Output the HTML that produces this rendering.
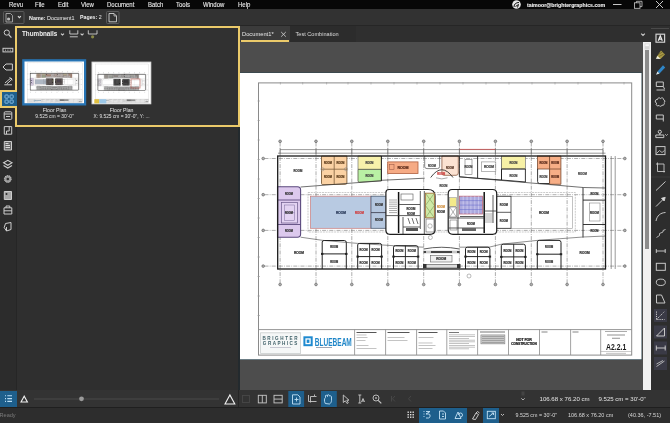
<!DOCTYPE html>
<html><head><meta charset="utf-8">
<style>
*{box-sizing:border-box}
html,body{margin:0;padding:0}
body{width:670px;height:423px;overflow:hidden;position:relative;background:#2e2e2e;font-family:"Liberation Sans",sans-serif;color:#ddd}
.a{position:absolute}
.t{position:absolute;white-space:nowrap;line-height:1}
svg{position:absolute;overflow:visible}
#menu{left:0;top:0;width:670px;height:9px;background:#070707}
#menu .t{top:2.05px;font-size:6.6px;color:#e6e6e6;-webkit-text-stroke:0.12px #e6e6e6;transform:scaleX(0.91);transform-origin:0 0}
#tb{left:0;top:9px;width:670px;height:16px;background:#323232}
#tabline{left:240px;top:25px;width:430px;height:1px;background:#262626}
#tabbar{left:240px;top:26px;width:430px;height:16px;background:#2f2f2f}
#doc{left:240px;top:42px;width:403px;height:348px;background:#4d4d4d}
#lside{left:0;top:25px;width:17px;height:365px;background:#2c2c2c}
#panel{left:15px;top:26px;width:225px;height:101px;border:2px solid #ebca6a;background:#313131}
#below{left:17px;top:127px;width:223px;height:263px;background:#2f2f2f}
#rside{left:651px;top:42px;width:19px;height:348px;background:#2d2d2d}
#btb{left:0;top:390px;width:670px;height:17px;background:#333333}
#status{left:0;top:407px;width:670px;height:16px;background:#2d2d2d;border-top:1px solid #1f1f1f}
.ic{stroke:#c8c8c8;fill:none;stroke-width:1}
</style></head><body><div id="wrap" style="position:absolute;left:0;top:0;width:670px;height:423px;will-change:transform">
<div id="menu" class="a">
 <span class="t" style="left:8.5px">Revu</span>
 <span class="t" style="left:35px">File</span>
 <span class="t" style="left:58px">Edit</span>
 <span class="t" style="left:81px">View</span>
 <span class="t" style="left:107px">Document</span>
 <span class="t" style="left:147.5px">Batch</span>
 <span class="t" style="left:176px">Tools</span>
 <span class="t" style="left:203px">Window</span>
 <span class="t" style="left:238px">Help</span>
 <span class="t" style="left:526.5px;font-size:6.1px;top:1.7px;color:#f2f2f2;font-weight:bold;transform:scaleX(0.86);transform-origin:0 0">taimoor@brightergraphics.com</span>
 <svg style="left:0;top:0" width="670" height="9">
  <circle cx="516.5" cy="4.5" r="4.3" fill="#e8e8e8"/>
  <path d="M514 7 C514 4,516 2.5,519 2.5 M515.5 6.5 L518.5 4.5 L517.5 7.5" stroke="#111" stroke-width="1" fill="none"/>
  <line x1="613" y1="4.5" x2="621.5" y2="4.5" stroke="#ddd" stroke-width="0.9"/>
  <rect x="634.5" y="2.8" width="5.5" height="5.5" stroke="#ccc" stroke-width="0.8" fill="none"/>
  <path d="M636.5 2.8 V1.3 H642 V6.6 H640" stroke="#ccc" stroke-width="0.8" fill="none"/>
  <path d="M656 1 L663 8 M663 1 L656 8" stroke="#ddd" stroke-width="0.9"/>
 </svg>
</div>
<div id="tb" class="a"></div>
<svg style="left:0;top:0" width="240" height="26">
 <rect x="3.5" y="11.5" width="20.5" height="12" rx="1" stroke="#5a5a5a" fill="none" stroke-width="1"/>
 <path d="M6 13.5 H10.5 L12.5 15.5 V22 H6 Z" stroke="#aaa" fill="none" stroke-width="0.9"/>
 <circle cx="8.6" cy="19" r="1.6" fill="#bbb"/>
 <path d="M17.9 16.2 L19.4 17.7 L20.9 16.2" stroke="#d8d8d8" fill="none" stroke-width="1.1"/><line x1="14" y1="12" x2="14" y2="23.5" stroke="#3e3e3e" stroke-width="0.8"/>
 <rect x="106.5" y="11.5" width="12.5" height="12" rx="1" stroke="#5a5a5a" fill="none" stroke-width="1"/>
 <path d="M109 13.5 H114 L116.5 16 V21.8 H109 Z" stroke="#d0d0d0" fill="none" stroke-width="0.9"/>
 <path d="M114 13.5 V16 H116.5" stroke="#d0d0d0" fill="none" stroke-width="0.7"/>
</svg>
<span class="t" style="left:28.6px;top:14.9px;font-size:6px;color:#f0f0f0;transform:scaleX(0.9);transform-origin:0 0"><b>Name:</b> Document1</span>
<span class="t" style="left:80px;top:14.9px;font-size:5.85px;color:#f0f0f0;transform:scaleX(0.9);transform-origin:0 0"><b>Pages:</b> 2</span>
<div id="tabline" class="a"></div>
<div id="tabbar" class="a"></div>
<div class="a" style="left:240px;top:26px;width:50px;height:16px;background:#3b3b3b"></div>
<div class="a" style="left:290px;top:26px;width:66px;height:16px;background:#2c2c2c"></div>
<div class="a" style="left:241px;top:40px;width:48px;height:2px;background:#ebca6a"></div>
<span class="t" style="left:242px;top:31.6px;font-size:5.75px;color:#e8e8e8">Document1*</span>
<svg style="left:0;top:0" width="670" height="50">
 <path d="M281.2 32 L285.8 36.6 M285.8 32 L281.2 36.6" stroke="#ccc" stroke-width="0.9"/>
 <path d="M641.2 33.6 L643 35.4 L644.8 33.6" stroke="#ccc" stroke-width="1.2" fill="none"/>
</svg>
<span class="t" style="left:295.5px;top:31.6px;font-size:5.6px;color:#ddd">Test Combination</span>
<div id="lside" class="a"></div>
<div id="below" class="a"></div>
<div class="a" style="left:16px;top:127px;width:1px;height:263px;background:#262626"></div>
<div class="a" style="left:238px;top:127px;width:1.5px;height:263px;background:#232a2e"></div>
<div id="panel" class="a"></div>
<div id="doc" class="a"></div>
<svg style="left:0;top:0" width="670" height="423">
<defs><clipPath id="vp"><rect x="240" y="42" width="403" height="348"/></clipPath></defs>
<g clip-path="url(#vp)"><rect x="239.5" y="72.5" width="402.5" height="287.5" fill="#2d4651"/>
<rect x="240" y="73" width="401.5" height="286.3" fill="#ffffff"/>
<g id="plan"><rect x="258.5" y="82.9" width="373.2" height="272.2" fill="none" stroke="#8a8a8a" stroke-width="1"/>
<line x1="280.4" y1="82" x2="280.4" y2="84.5" stroke="#999" stroke-width="0.6"/>
<line x1="302.7" y1="82" x2="302.7" y2="84.5" stroke="#999" stroke-width="0.6"/>
<line x1="326.6" y1="82" x2="326.6" y2="84.5" stroke="#999" stroke-width="0.6"/>
<line x1="348" y1="82" x2="348" y2="84.5" stroke="#999" stroke-width="0.6"/>
<line x1="371" y1="82" x2="371" y2="84.5" stroke="#999" stroke-width="0.6"/>
<line x1="394" y1="82" x2="394" y2="84.5" stroke="#999" stroke-width="0.6"/>
<line x1="417" y1="82" x2="417" y2="84.5" stroke="#999" stroke-width="0.6"/>
<line x1="440" y1="82" x2="440" y2="84.5" stroke="#999" stroke-width="0.6"/>
<line x1="463" y1="82" x2="463" y2="84.5" stroke="#999" stroke-width="0.6"/>
<line x1="486" y1="82" x2="486" y2="84.5" stroke="#999" stroke-width="0.6"/>
<line x1="509" y1="82" x2="509" y2="84.5" stroke="#999" stroke-width="0.6"/>
<line x1="532" y1="82" x2="532" y2="84.5" stroke="#999" stroke-width="0.6"/>
<line x1="555" y1="82" x2="555" y2="84.5" stroke="#999" stroke-width="0.6"/>
<line x1="578" y1="82" x2="578" y2="84.5" stroke="#999" stroke-width="0.6"/>
<line x1="601" y1="82" x2="601" y2="84.5" stroke="#999" stroke-width="0.6"/>
<line x1="624" y1="82" x2="624" y2="84.5" stroke="#999" stroke-width="0.6"/>
<line x1="257.5" y1="101" x2="260" y2="101" stroke="#999" stroke-width="0.6"/>
<line x1="257.5" y1="120.5" x2="260" y2="120.5" stroke="#999" stroke-width="0.6"/>
<line x1="257.5" y1="140" x2="260" y2="140" stroke="#999" stroke-width="0.6"/>
<line x1="257.5" y1="159.5" x2="260" y2="159.5" stroke="#999" stroke-width="0.6"/>
<line x1="257.5" y1="179" x2="260" y2="179" stroke="#999" stroke-width="0.6"/>
<line x1="257.5" y1="198.5" x2="260" y2="198.5" stroke="#999" stroke-width="0.6"/>
<line x1="257.5" y1="218" x2="260" y2="218" stroke="#999" stroke-width="0.6"/>
<line x1="257.5" y1="237.5" x2="260" y2="237.5" stroke="#999" stroke-width="0.6"/>
<line x1="257.5" y1="257" x2="260" y2="257" stroke="#999" stroke-width="0.6"/>
<line x1="257.5" y1="276.5" x2="260" y2="276.5" stroke="#999" stroke-width="0.6"/>
<line x1="257.5" y1="296" x2="260" y2="296" stroke="#999" stroke-width="0.6"/>
<line x1="257.5" y1="315.5" x2="260" y2="315.5" stroke="#999" stroke-width="0.6"/>
<line x1="280.1" y1="142.5" x2="280.1" y2="283" stroke="#6a6a6a" stroke-width="0.55" stroke-dasharray="4 1.2 0.8 1.2"/>
<circle cx="280.1" cy="141.3" r="1.35" fill="#b0b0b0" stroke="#555" stroke-width="0.6"/>
<circle cx="280.1" cy="284.5" r="1.35" fill="#b0b0b0" stroke="#555" stroke-width="0.6"/>
<line x1="316" y1="142.5" x2="316" y2="283" stroke="#6a6a6a" stroke-width="0.55" stroke-dasharray="4 1.2 0.8 1.2"/>
<circle cx="316" cy="141.3" r="1.35" fill="#b0b0b0" stroke="#555" stroke-width="0.6"/>
<circle cx="316" cy="284.5" r="1.35" fill="#b0b0b0" stroke="#555" stroke-width="0.6"/>
<line x1="351.8" y1="142.5" x2="351.8" y2="283" stroke="#6a6a6a" stroke-width="0.55" stroke-dasharray="4 1.2 0.8 1.2"/>
<circle cx="351.8" cy="141.3" r="1.35" fill="#b0b0b0" stroke="#555" stroke-width="0.6"/>
<circle cx="351.8" cy="284.5" r="1.35" fill="#b0b0b0" stroke="#555" stroke-width="0.6"/>
<line x1="387.8" y1="142.5" x2="387.8" y2="283" stroke="#6a6a6a" stroke-width="0.55" stroke-dasharray="4 1.2 0.8 1.2"/>
<circle cx="387.8" cy="141.3" r="1.35" fill="#b0b0b0" stroke="#555" stroke-width="0.6"/>
<circle cx="387.8" cy="284.5" r="1.35" fill="#b0b0b0" stroke="#555" stroke-width="0.6"/>
<line x1="423.7" y1="142.5" x2="423.7" y2="283" stroke="#6a6a6a" stroke-width="0.55" stroke-dasharray="4 1.2 0.8 1.2"/>
<circle cx="423.7" cy="141.3" r="1.35" fill="#b0b0b0" stroke="#555" stroke-width="0.6"/>
<circle cx="423.7" cy="284.5" r="1.35" fill="#b0b0b0" stroke="#555" stroke-width="0.6"/>
<line x1="459.4" y1="142.5" x2="459.4" y2="283" stroke="#6a6a6a" stroke-width="0.55" stroke-dasharray="4 1.2 0.8 1.2"/>
<circle cx="459.4" cy="141.3" r="1.35" fill="#b0b0b0" stroke="#555" stroke-width="0.6"/>
<circle cx="459.4" cy="284.5" r="1.35" fill="#b0b0b0" stroke="#555" stroke-width="0.6"/>
<line x1="495.4" y1="142.5" x2="495.4" y2="283" stroke="#6a6a6a" stroke-width="0.55" stroke-dasharray="4 1.2 0.8 1.2"/>
<circle cx="495.4" cy="141.3" r="1.35" fill="#b0b0b0" stroke="#555" stroke-width="0.6"/>
<circle cx="495.4" cy="284.5" r="1.35" fill="#b0b0b0" stroke="#555" stroke-width="0.6"/>
<line x1="531.3" y1="142.5" x2="531.3" y2="283" stroke="#6a6a6a" stroke-width="0.55" stroke-dasharray="4 1.2 0.8 1.2"/>
<circle cx="531.3" cy="141.3" r="1.35" fill="#b0b0b0" stroke="#555" stroke-width="0.6"/>
<circle cx="531.3" cy="284.5" r="1.35" fill="#b0b0b0" stroke="#555" stroke-width="0.6"/>
<line x1="567.1" y1="142.5" x2="567.1" y2="283" stroke="#6a6a6a" stroke-width="0.55" stroke-dasharray="4 1.2 0.8 1.2"/>
<circle cx="567.1" cy="141.3" r="1.35" fill="#b0b0b0" stroke="#555" stroke-width="0.6"/>
<circle cx="567.1" cy="284.5" r="1.35" fill="#b0b0b0" stroke="#555" stroke-width="0.6"/>
<line x1="603" y1="142.5" x2="603" y2="283" stroke="#6a6a6a" stroke-width="0.55" stroke-dasharray="4 1.2 0.8 1.2"/>
<circle cx="603" cy="141.3" r="1.35" fill="#b0b0b0" stroke="#555" stroke-width="0.6"/>
<circle cx="603" cy="284.5" r="1.35" fill="#b0b0b0" stroke="#555" stroke-width="0.6"/>
<line x1="264.5" y1="158.5" x2="623.5" y2="158.5" stroke="#6a6a6a" stroke-width="0.55" stroke-dasharray="4 1.2 0.8 1.2"/>
<circle cx="263.2" cy="158.5" r="1.35" fill="#b0b0b0" stroke="#555" stroke-width="0.6"/>
<circle cx="624.8" cy="158.5" r="1.35" fill="#b0b0b0" stroke="#555" stroke-width="0.6"/>
<line x1="264.5" y1="194.7" x2="623.5" y2="194.7" stroke="#6a6a6a" stroke-width="0.55" stroke-dasharray="4 1.2 0.8 1.2"/>
<circle cx="263.2" cy="194.7" r="1.35" fill="#b0b0b0" stroke="#555" stroke-width="0.6"/>
<circle cx="624.8" cy="194.7" r="1.35" fill="#b0b0b0" stroke="#555" stroke-width="0.6"/>
<line x1="264.5" y1="230.4" x2="623.5" y2="230.4" stroke="#6a6a6a" stroke-width="0.55" stroke-dasharray="4 1.2 0.8 1.2"/>
<circle cx="263.2" cy="230.4" r="1.35" fill="#b0b0b0" stroke="#555" stroke-width="0.6"/>
<circle cx="624.8" cy="230.4" r="1.35" fill="#b0b0b0" stroke="#555" stroke-width="0.6"/>
<line x1="264.5" y1="266.1" x2="623.5" y2="266.1" stroke="#6a6a6a" stroke-width="0.55" stroke-dasharray="4 1.2 0.8 1.2"/>
<circle cx="263.2" cy="266.1" r="1.35" fill="#b0b0b0" stroke="#555" stroke-width="0.6"/>
<circle cx="624.8" cy="266.1" r="1.35" fill="#b0b0b0" stroke="#555" stroke-width="0.6"/>
<line x1="280" y1="149.6" x2="603" y2="149.6" stroke="#555" stroke-width="0.6"/>
<line x1="278" y1="153.2" x2="605.5" y2="153.2" stroke="#555" stroke-width="0.6"/>
<line x1="459.4" y1="149.4" x2="495.4" y2="149.4" stroke="#d04040" stroke-width="0.7"/>
<line x1="280.1" y1="148" x2="280.1" y2="155" stroke="#555" stroke-width="0.5"/>
<line x1="316" y1="148" x2="316" y2="155" stroke="#555" stroke-width="0.5"/>
<line x1="351.8" y1="148" x2="351.8" y2="155" stroke="#555" stroke-width="0.5"/>
<line x1="387.8" y1="148" x2="387.8" y2="155" stroke="#555" stroke-width="0.5"/>
<line x1="423.7" y1="148" x2="423.7" y2="155" stroke="#555" stroke-width="0.5"/>
<line x1="459.4" y1="148" x2="459.4" y2="155" stroke="#555" stroke-width="0.5"/>
<line x1="495.4" y1="148" x2="495.4" y2="155" stroke="#555" stroke-width="0.5"/>
<line x1="531.3" y1="148" x2="531.3" y2="155" stroke="#555" stroke-width="0.5"/>
<line x1="567.1" y1="148" x2="567.1" y2="155" stroke="#555" stroke-width="0.5"/>
<line x1="603" y1="148" x2="603" y2="155" stroke="#555" stroke-width="0.5"/>
<line x1="611.2" y1="156" x2="611.2" y2="269" stroke="#555" stroke-width="0.6"/>
<line x1="615.2" y1="156" x2="615.2" y2="269" stroke="#555" stroke-width="0.6"/>
<text x="293.6" y="171.9" font-family="Liberation Sans" font-weight="bold" font-size="3.3" fill="#3a3a3a" stroke="#3a3a3a" stroke-width="0.2" textLength="8.75" lengthAdjust="spacingAndGlyphs">ROOM</text>
<path d="M321.5 156 H346.9 V183 Q346.9 184.3 345.5 184.3 L322.8 184.6 Q321.5 184.6 321.5 183.3 Z" fill="#fbd2a4" stroke="#7d5f3c" stroke-width="0.9"/>
<line x1="334.2" y1="156" x2="334.2" y2="184.4" stroke="#7d5f3c" stroke-width="0.8"/>
<line x1="321.5" y1="169.2" x2="346.9" y2="169.2" stroke="#7d5f3c" stroke-width="0.8"/>
<text x="324.0" y="163.6" font-family="Liberation Sans" font-weight="bold" font-size="3.3" fill="#5a3a1a" stroke="#5a3a1a" stroke-width="0.2" textLength="8" lengthAdjust="spacingAndGlyphs">ROOM</text>
<text x="336.5" y="163.6" font-family="Liberation Sans" font-weight="bold" font-size="3.3" fill="#5a3a1a" stroke="#5a3a1a" stroke-width="0.2" textLength="8" lengthAdjust="spacingAndGlyphs">ROOM</text>
<text x="324.0" y="177.6" font-family="Liberation Sans" font-weight="bold" font-size="3.3" fill="#5a3a1a" stroke="#5a3a1a" stroke-width="0.2" textLength="8" lengthAdjust="spacingAndGlyphs">ROOM</text>
<text x="336.5" y="177.6" font-family="Liberation Sans" font-weight="bold" font-size="3.3" fill="#5a3a1a" stroke="#5a3a1a" stroke-width="0.2" textLength="8" lengthAdjust="spacingAndGlyphs">ROOM</text>
<circle cx="322.5" cy="169.2" r="1.6" fill="none" stroke="#8a8a8a" stroke-width="0.5"/>
<circle cx="346" cy="169.2" r="1.6" fill="none" stroke="#8a8a8a" stroke-width="0.5"/>
<path d="M358 156 H381.4 V169.4 H358 Z" fill="#f7f1ab" stroke="#777" stroke-width="0.7"/>
<path d="M358 169.4 H381.4 V180.8 L359.5 182.2 Q358 182.2 358 180.8 Z" fill="#b9f0a4" stroke="#5a5a4a" stroke-width="0.8"/>
<text x="365.5" y="164.1" font-family="Liberation Sans" font-weight="bold" font-size="3.3" fill="#444" stroke="#444" stroke-width="0.2" textLength="8" lengthAdjust="spacingAndGlyphs">ROOM</text>
<text x="365.5" y="176.6" font-family="Liberation Sans" font-weight="bold" font-size="3.3" fill="#444" stroke="#444" stroke-width="0.2" textLength="8" lengthAdjust="spacingAndGlyphs">ROOM</text>
<line x1="381.4" y1="156" x2="381.4" y2="181" stroke="#222" stroke-width="1"/>
<rect x="387.7" y="161.9" width="30.3" height="11.6" fill="#f6ab85" stroke="#b06040" stroke-width="0.8"/>
<rect x="389.5" y="164.5" width="4.5" height="5" fill="none" stroke="#905040" stroke-width="0.5"/>
<text x="397.4" y="168.7" font-family="Liberation Sans" font-weight="bold" font-size="3.3" fill="#5a2a1a" stroke="#5a2a1a" stroke-width="0.2" textLength="11.25" lengthAdjust="spacingAndGlyphs">ROOM</text>
<path d="M424.7 156 V166.5 Q424.7 168.6 427 168.6 H437.5 Q439.6 168.6 439.6 166.5 V156" fill="none" stroke="#555" stroke-width="0.7"/>
<text x="428.0" y="167.1" font-family="Liberation Sans" font-weight="bold" font-size="3.3" fill="#444" stroke="#444" stroke-width="0.2" textLength="8" lengthAdjust="spacingAndGlyphs">ROOM</text>
<path d="M441.9 156 H458.3 V173 Q458.3 175.3 456 175.3 H444 Q441.9 175.3 441.9 173 Z" fill="#fbe2d2" stroke="#8a5a40" stroke-width="0.8"/>
<text x="446.0" y="168.6" font-family="Liberation Sans" font-weight="bold" font-size="3.3" fill="#5a3a2a" stroke="#5a3a2a" stroke-width="0.2" textLength="8" lengthAdjust="spacingAndGlyphs">ROOM</text>
<path d="M430.7 177.5 Q441.8 162 453 177.5" fill="none" stroke="#333" stroke-width="0.9"/>
<path d="M436 177.8 Q441.8 180 447.5 177.8" fill="none" stroke="#555" stroke-width="0.5"/>
<text x="437.2" y="175.4" font-family="Liberation Sans" font-weight="bold" font-size="3.3" fill="#d04040" stroke="#d04040" stroke-width="0.2" textLength="8" lengthAdjust="spacingAndGlyphs">ROOM</text>
<text x="439.5" y="186.8" font-family="Liberation Sans" font-weight="bold" font-size="3.3" fill="#444" stroke="#444" stroke-width="0.2" textLength="8" lengthAdjust="spacingAndGlyphs">ROOM</text>
<path d="M459.4 156 V176.8 L477.6 178.3 V156" fill="none" stroke="#222" stroke-width="0.9"/>
<rect x="465" y="159.6" width="7" height="14.9" fill="none" stroke="#777" stroke-width="0.6"/>
<text x="464.5" y="168.1" font-family="Liberation Sans" font-weight="bold" font-size="3.3" fill="#444" stroke="#444" stroke-width="0.2" textLength="8" lengthAdjust="spacingAndGlyphs">ROOM</text>
<path d="M477.6 178.3 L501.5 180 V156" fill="none" stroke="#222" stroke-width="0.9"/>
<rect x="481.6" y="161.9" width="14.2" height="9.7" fill="none" stroke="#888" stroke-width="0.6"/>
<text x="484.0" y="167.9" font-family="Liberation Sans" font-weight="bold" font-size="3.3" fill="#444" stroke="#444" stroke-width="0.2" textLength="10.0" lengthAdjust="spacingAndGlyphs">ROOM</text>
<rect x="501.5" y="156" width="23.9" height="13" fill="#f7f1a6" stroke="#777" stroke-width="0.7"/>
<path d="M501.5 169 H525.4 V182 L501.5 180 Z" fill="none" stroke="#222" stroke-width="0.9"/>
<text x="509.5" y="163.9" font-family="Liberation Sans" font-weight="bold" font-size="3.3" fill="#444" stroke="#444" stroke-width="0.2" textLength="8" lengthAdjust="spacingAndGlyphs">ROOM</text>
<text x="509.5" y="176.6" font-family="Liberation Sans" font-weight="bold" font-size="3.3" fill="#444" stroke="#444" stroke-width="0.2" textLength="8" lengthAdjust="spacingAndGlyphs">ROOM</text>
<rect x="537.6" y="156" width="11.9" height="13" fill="#f7ae86" stroke="#7a4a30" stroke-width="0.8"/>
<path d="M537.6 169 V181.5 Q537.6 183.5 539.5 183.5 H549.6 V169" fill="none" stroke="#222" stroke-width="0.9"/>
<path d="M549.6 156 H560.9 V184.3 H549.6 Z" fill="#f7ae86" stroke="#7a4a30" stroke-width="0.8"/>
<line x1="549.6" y1="169" x2="560.9" y2="169" stroke="#7a4a30" stroke-width="0.8"/>
<text x="539.5" y="163.6" font-family="Liberation Sans" font-weight="bold" font-size="3.3" fill="#5a2a1a" stroke="#5a2a1a" stroke-width="0.2" textLength="8" lengthAdjust="spacingAndGlyphs">ROOM</text>
<text x="551.2" y="163.6" font-family="Liberation Sans" font-weight="bold" font-size="3.3" fill="#5a2a1a" stroke="#5a2a1a" stroke-width="0.2" textLength="8" lengthAdjust="spacingAndGlyphs">ROOM</text>
<text x="551.2" y="177.6" font-family="Liberation Sans" font-weight="bold" font-size="3.3" fill="#5a2a1a" stroke="#5a2a1a" stroke-width="0.2" textLength="8" lengthAdjust="spacingAndGlyphs">ROOM</text>
<text x="539.5" y="177.6" font-family="Liberation Sans" font-weight="bold" font-size="3.3" fill="#444" stroke="#444" stroke-width="0.2" textLength="8" lengthAdjust="spacingAndGlyphs">ROOM</text>
<text x="578.1" y="174.9" font-family="Liberation Sans" font-weight="bold" font-size="3.3" fill="#444" stroke="#444" stroke-width="0.2" textLength="8.75" lengthAdjust="spacingAndGlyphs">ROOM</text>
<path d="M300.6 187 L381.4 180.8 M381.4 180.3 L424.7 178.2" fill="none" stroke="#333" stroke-width="0.7"/>
<path d="M459.4 176.8 L583.3 187.5 L605.5 188" fill="none" stroke="#333" stroke-width="0.7"/>
<path d="M277.5 186.8 H297.5 Q300.6 186.8 300.6 190 V234 Q300.6 237.2 297.5 237.2 H277.5 Z" fill="#dcc9ed" stroke="#5b4a7e" stroke-width="1.1"/>
<line x1="277.5" y1="200" x2="300.6" y2="200" stroke="#5b4a7e" stroke-width="0.9"/>
<line x1="277.5" y1="224.5" x2="300.6" y2="224.5" stroke="#5b4a7e" stroke-width="0.9"/>
<rect x="281.5" y="202.5" width="16" height="20.5" fill="#e3d3f2" stroke="#6a5a8a" stroke-width="0.7"/>
<rect x="284.5" y="205" width="10" height="15.5" fill="none" stroke="#7a6a9a" stroke-width="0.5"/>
<line x1="284.5" y1="212.7" x2="294.5" y2="212.7" stroke="#7a6a9a" stroke-width="0.5"/>
<text x="285.0" y="194.6" font-family="Liberation Sans" font-weight="bold" font-size="3.3" fill="#333" stroke="#333" stroke-width="0.2" textLength="8" lengthAdjust="spacingAndGlyphs">ROOM</text>
<text x="285.0" y="232.1" font-family="Liberation Sans" font-weight="bold" font-size="3.3" fill="#333" stroke="#333" stroke-width="0.2" textLength="8" lengthAdjust="spacingAndGlyphs">ROOM</text>
<text x="285.0" y="213.6" font-family="Liberation Sans" font-weight="bold" font-size="3.3" fill="#333" stroke="#333" stroke-width="0.2" textLength="8" lengthAdjust="spacingAndGlyphs">ROOM</text>
<rect x="308" y="192.5" width="267.3" height="39.5" fill="none" stroke="#aaa" stroke-width="0.6" stroke-dasharray="2 0.8"/>
<rect x="310.6" y="196.2" width="60.4" height="32.1" fill="#b8cae2" stroke="#c87a7a" stroke-width="0.7"/>
<rect x="371" y="196.2" width="15.6" height="32.1" fill="#b5c7df" stroke="#4a5a70" stroke-width="0.8"/>
<line x1="371" y1="212.6" x2="386.6" y2="212.6" stroke="#334" stroke-width="0.8"/>
<text x="336.0" y="214.1" font-family="Liberation Sans" font-weight="bold" font-size="3.3" fill="#2a3a5a" stroke="#2a3a5a" stroke-width="0.2" textLength="10.0" lengthAdjust="spacingAndGlyphs">ROOM</text>
<text x="355.1" y="214.4" font-family="Liberation Sans" font-weight="bold" font-size="3.3" fill="#d03a3a" stroke="#d03a3a" stroke-width="0.2" textLength="8.75" lengthAdjust="spacingAndGlyphs">ROOM</text>
<text x="375.0" y="206.1" font-family="Liberation Sans" font-weight="bold" font-size="3.3" fill="#333" stroke="#333" stroke-width="0.2" textLength="8" lengthAdjust="spacingAndGlyphs">ROOM</text>
<text x="375.0" y="221.1" font-family="Liberation Sans" font-weight="bold" font-size="3.3" fill="#333" stroke="#333" stroke-width="0.2" textLength="8" lengthAdjust="spacingAndGlyphs">ROOM</text>
<rect x="496.7" y="196.4" width="75.6" height="32.1" fill="none" stroke="#999" stroke-width="0.6"/>
<rect x="496.7" y="196.2" width="14.3" height="32.1" fill="none" stroke="#333" stroke-width="0.8"/>
<line x1="496.7" y1="212.3" x2="511" y2="212.3" stroke="#333" stroke-width="0.8"/>
<text x="499.8" y="205.6" font-family="Liberation Sans" font-weight="bold" font-size="3.3" fill="#333" stroke="#333" stroke-width="0.2" textLength="8" lengthAdjust="spacingAndGlyphs">ROOM</text>
<text x="499.8" y="221.6" font-family="Liberation Sans" font-weight="bold" font-size="3.3" fill="#333" stroke="#333" stroke-width="0.2" textLength="8" lengthAdjust="spacingAndGlyphs">ROOM</text>
<text x="539.0" y="214.1" font-family="Liberation Sans" font-weight="bold" font-size="3.3" fill="#333" stroke="#333" stroke-width="0.2" textLength="10.0" lengthAdjust="spacingAndGlyphs">ROOM</text>
<path d="M583 187.5 V237.5 M583 200.1 H605 M583 224.5 H605" fill="none" stroke="#222" stroke-width="0.9"/>
<rect x="589.5" y="203" width="10.5" height="18" fill="none" stroke="#888" stroke-width="0.6"/>
<text x="590.5" y="195.1" font-family="Liberation Sans" font-weight="bold" font-size="3.3" fill="#333" stroke="#333" stroke-width="0.2" textLength="8" lengthAdjust="spacingAndGlyphs">ROOM</text>
<text x="590.1" y="213.6" font-family="Liberation Sans" font-weight="bold" font-size="3.3" fill="#333" stroke="#333" stroke-width="0.2" textLength="8.75" lengthAdjust="spacingAndGlyphs">ROOM</text>
<text x="590.5" y="232.1" font-family="Liberation Sans" font-weight="bold" font-size="3.3" fill="#333" stroke="#333" stroke-width="0.2" textLength="8" lengthAdjust="spacingAndGlyphs">ROOM</text>
<path d="M389 189.5 H428 Q435 189.5 435 196 V230 Q435 234.3 430 234.3 H390 Q385.9 234.3 385.9 230 V192.5 Q385.9 189.5 389 189.5 Z" fill="#fff" stroke="#1e1e1e" stroke-width="1.2"/>
<path d="M398.6 192 V233" fill="none" stroke="#111" stroke-width="1.5"/><path d="M420.3 191 V229 M424.3 191 V234 M386 215.6 H420 M398.6 204.5 H420 M403 227 H420 M403 217 V234" fill="none" stroke="#333" stroke-width="0.8"/>
<line x1="389" y1="200.0" x2="397" y2="200.0" stroke="#555" stroke-width="0.5"/>
<line x1="389" y1="202.1" x2="397" y2="202.1" stroke="#555" stroke-width="0.5"/>
<line x1="389" y1="204.2" x2="397" y2="204.2" stroke="#555" stroke-width="0.5"/>
<line x1="389" y1="206.3" x2="397" y2="206.3" stroke="#555" stroke-width="0.5"/>
<line x1="389" y1="208.4" x2="397" y2="208.4" stroke="#555" stroke-width="0.5"/>
<line x1="389" y1="210.5" x2="397" y2="210.5" stroke="#555" stroke-width="0.5"/>
<line x1="389" y1="212.6" x2="397" y2="212.6" stroke="#555" stroke-width="0.5"/>
<rect x="401" y="194" width="12" height="6" fill="none" stroke="#555" stroke-width="0.6"/>
<text x="406.6" y="210.1" font-family="Liberation Sans" font-weight="bold" font-size="3.3" fill="#333" stroke="#333" stroke-width="0.2" textLength="8.75" lengthAdjust="spacingAndGlyphs">ROOM</text>
<text x="407.0" y="214.7" font-family="Liberation Sans" font-weight="bold" font-size="3.3" fill="#333" stroke="#333" stroke-width="0.2" textLength="8" lengthAdjust="spacingAndGlyphs">ROOM</text>
<path d="M408 218 L410 224" stroke="#333" stroke-width="0.7"/>
<path d="M412 218 L414 224" stroke="#333" stroke-width="0.7"/>
<path d="M416 218 L418 224" stroke="#333" stroke-width="0.7"/>
<rect x="406" y="228" width="12" height="3" fill="#555"/>
<rect x="425.4" y="193.2" width="9" height="24.6" fill="#cfe9a6" stroke="#a8743e" stroke-width="0.9"/>
<path d="M425.4 193.2 L434.4 205.5 M434.4 193.2 L425.4 205.5 M425.4 205.5 L434.4 217.8 M434.4 205.5 L425.4 217.8" stroke="#6a8a4a" stroke-width="0.5"/>
<rect x="426" y="219" width="8" height="13" fill="none" stroke="#555" stroke-width="0.6"/>
<circle cx="430" cy="226" r="2.2" fill="none" stroke="#777" stroke-width="0.5"/>
<text x="437.0" y="213.0" font-family="Liberation Sans" font-weight="bold" font-size="3.3" fill="#333" stroke="#333" stroke-width="0.2" textLength="8" lengthAdjust="spacingAndGlyphs">ROOM</text>
<text x="437.0" y="207.9" font-family="Liberation Sans" font-weight="bold" font-size="3.3" fill="#d09040" stroke="#d09040" stroke-width="0.2" textLength="8" lengthAdjust="spacingAndGlyphs">ROOM</text>
<circle cx="430.4" cy="237.5" r="2" fill="none" stroke="#777" stroke-width="0.5"/>
<path d="M452 189.5 H492.5 Q496.7 189.5 496.7 193.5 V230.5 Q496.7 234.3 492.5 234.3 H453 Q448.2 234.3 448.2 229.5 V194 Q448.2 189.5 452 189.5 Z" fill="#fff" stroke="#1e1e1e" stroke-width="1.2"/>
<rect x="449.7" y="197.7" width="6.7" height="8.9" fill="#f3ea8a" stroke="#888" stroke-width="0.5"/>
<path d="M449.7 207 L456.4 217 M456.4 207 L449.7 217" stroke="#666" stroke-width="0.5"/>
<rect x="449.7" y="207" width="6.7" height="10" fill="none" stroke="#555" stroke-width="0.5"/>
<rect x="459.4" y="196.2" width="23.1" height="17.8" fill="#aaa8de" stroke="#c06a7a" stroke-width="0.8"/>
<line x1="463.2" y1="196.2" x2="463.2" y2="214" stroke="#e8e8ff" stroke-width="0.5"/>
<line x1="467.1" y1="196.2" x2="467.1" y2="214" stroke="#e8e8ff" stroke-width="0.5"/>
<line x1="470.9" y1="196.2" x2="470.9" y2="214" stroke="#e8e8ff" stroke-width="0.5"/>
<line x1="474.8" y1="196.2" x2="474.8" y2="214" stroke="#e8e8ff" stroke-width="0.5"/>
<line x1="478.6" y1="196.2" x2="478.6" y2="214" stroke="#e8e8ff" stroke-width="0.5"/>
<line x1="459.4" y1="200.6" x2="482.5" y2="200.6" stroke="#5a60c8" stroke-width="0.45"/>
<line x1="459.4" y1="205.1" x2="482.5" y2="205.1" stroke="#5a60c8" stroke-width="0.45"/>
<line x1="459.4" y1="209.5" x2="482.5" y2="209.5" stroke="#5a60c8" stroke-width="0.45"/>
<path d="M484.2 192 V233" fill="none" stroke="#111" stroke-width="1.5"/><path d="M458 190 V234 M493 195 V223 M448.5 218 H484 M484 211 H496 M460 216.5 H484 M448.5 228 H484" fill="none" stroke="#333" stroke-width="0.8"/>
<line x1="485" y1="214" x2="492.5" y2="214" stroke="#555" stroke-width="0.5"/>
<line x1="485" y1="216" x2="492.5" y2="216" stroke="#555" stroke-width="0.5"/>
<line x1="485" y1="218" x2="492.5" y2="218" stroke="#555" stroke-width="0.5"/>
<line x1="485" y1="220" x2="492.5" y2="220" stroke="#555" stroke-width="0.5"/>
<line x1="485" y1="222" x2="492.5" y2="222" stroke="#555" stroke-width="0.5"/>
<rect x="450" y="220" width="7" height="10" fill="none" stroke="#555" stroke-width="0.5"/>
<rect x="462" y="228" width="14" height="3" fill="#666"/>
<text x="467.0" y="225.1" font-family="Liberation Sans" font-weight="bold" font-size="3.3" fill="#333" stroke="#333" stroke-width="0.2" textLength="8" lengthAdjust="spacingAndGlyphs">ROOM</text>
<path d="M300.6 237.2 L322.2 240.3 L357.7 243.4 L393.5 245.7 L423.7 247.2" fill="none" stroke="#444" stroke-width="0.6"/>
<path d="M459.6 247.2 L489.9 247 L501.3 244.2 L537.3 240.4 L583 237 L605.5 236" fill="none" stroke="#444" stroke-width="0.6"/>
<text x="294.0" y="254.2" font-family="Liberation Sans" font-weight="bold" font-size="3.3" fill="#333" stroke="#333" stroke-width="0.2" textLength="10.0" lengthAdjust="spacingAndGlyphs">ROOM</text>
<path d="M322.2 269 V242.0 Q322.2 240.5 324.2 240.5 H344.3 Q346.3 240.5 346.3 242.5 V269" fill="none" stroke="#222" stroke-width="1"/>
<line x1="322.2" y1="253.9" x2="346.3" y2="253.9" stroke="#222" stroke-width="1"/>
<text x="330.2" y="248.3" font-family="Liberation Sans" font-weight="bold" font-size="3.3" fill="#333" stroke="#333" stroke-width="0.2" textLength="8" lengthAdjust="spacingAndGlyphs">ROOM</text>
<text x="330.2" y="262.6" font-family="Liberation Sans" font-weight="bold" font-size="3.3" fill="#333" stroke="#333" stroke-width="0.2" textLength="8" lengthAdjust="spacingAndGlyphs">ROOM</text>
<rect x="321.0" y="252.9" width="2.4" height="2" fill="#222"/>
<rect x="345.1" y="252.9" width="2.4" height="2" fill="#222"/>
<path d="M357.7 269 V244.9 Q357.7 243.4 359.7 243.4 H379.6 Q381.6 243.4 381.6 245.4 V269" fill="none" stroke="#222" stroke-width="1"/>
<line x1="357.7" y1="256.6" x2="381.6" y2="256.6" stroke="#222" stroke-width="1"/>
<line x1="369.6" y1="243.4" x2="369.6" y2="269" stroke="#222" stroke-width="0.9"/>
<text x="359.6" y="251.1" font-family="Liberation Sans" font-weight="bold" font-size="3.3" fill="#333" stroke="#333" stroke-width="0.2" textLength="8" lengthAdjust="spacingAndGlyphs">ROOM</text>
<text x="359.6" y="263.9" font-family="Liberation Sans" font-weight="bold" font-size="3.3" fill="#333" stroke="#333" stroke-width="0.2" textLength="8" lengthAdjust="spacingAndGlyphs">ROOM</text>
<text x="371.6" y="251.1" font-family="Liberation Sans" font-weight="bold" font-size="3.3" fill="#333" stroke="#333" stroke-width="0.2" textLength="8" lengthAdjust="spacingAndGlyphs">ROOM</text>
<text x="371.6" y="263.9" font-family="Liberation Sans" font-weight="bold" font-size="3.3" fill="#333" stroke="#333" stroke-width="0.2" textLength="8" lengthAdjust="spacingAndGlyphs">ROOM</text>
<rect x="356.5" y="255.60000000000002" width="2.4" height="2" fill="#222"/>
<rect x="380.40000000000003" y="255.60000000000002" width="2.4" height="2" fill="#222"/>
<path d="M393.5 269 V247.2 Q393.5 245.7 395.5 245.7 H416.1 Q418.1 245.7 418.1 247.7 V269" fill="none" stroke="#222" stroke-width="1"/>
<line x1="393.5" y1="256.6" x2="418.1" y2="256.6" stroke="#222" stroke-width="1"/>
<line x1="405.4" y1="245.7" x2="405.4" y2="269" stroke="#222" stroke-width="0.9"/>
<text x="395.4" y="252.2" font-family="Liberation Sans" font-weight="bold" font-size="3.3" fill="#333" stroke="#333" stroke-width="0.2" textLength="8" lengthAdjust="spacingAndGlyphs">ROOM</text>
<text x="395.4" y="263.9" font-family="Liberation Sans" font-weight="bold" font-size="3.3" fill="#333" stroke="#333" stroke-width="0.2" textLength="8" lengthAdjust="spacingAndGlyphs">ROOM</text>
<text x="407.8" y="252.2" font-family="Liberation Sans" font-weight="bold" font-size="3.3" fill="#333" stroke="#333" stroke-width="0.2" textLength="8" lengthAdjust="spacingAndGlyphs">ROOM</text>
<text x="407.8" y="263.9" font-family="Liberation Sans" font-weight="bold" font-size="3.3" fill="#333" stroke="#333" stroke-width="0.2" textLength="8" lengthAdjust="spacingAndGlyphs">ROOM</text>
<rect x="392.3" y="255.60000000000002" width="2.4" height="2" fill="#222"/>
<rect x="416.90000000000003" y="255.60000000000002" width="2.4" height="2" fill="#222"/>
<path d="M465.5 269 V248.7 Q465.5 247.2 467.5 247.2 H487.9 Q489.9 247.2 489.9 249.2 V269" fill="none" stroke="#222" stroke-width="1"/>
<line x1="465.5" y1="256.6" x2="489.9" y2="256.6" stroke="#222" stroke-width="1"/>
<line x1="477.5" y1="247.2" x2="477.5" y2="269" stroke="#222" stroke-width="0.9"/>
<text x="467.5" y="253.0" font-family="Liberation Sans" font-weight="bold" font-size="3.3" fill="#333" stroke="#333" stroke-width="0.2" textLength="8" lengthAdjust="spacingAndGlyphs">ROOM</text>
<text x="467.5" y="263.9" font-family="Liberation Sans" font-weight="bold" font-size="3.3" fill="#333" stroke="#333" stroke-width="0.2" textLength="8" lengthAdjust="spacingAndGlyphs">ROOM</text>
<text x="479.7" y="253.0" font-family="Liberation Sans" font-weight="bold" font-size="3.3" fill="#333" stroke="#333" stroke-width="0.2" textLength="8" lengthAdjust="spacingAndGlyphs">ROOM</text>
<text x="479.7" y="263.9" font-family="Liberation Sans" font-weight="bold" font-size="3.3" fill="#333" stroke="#333" stroke-width="0.2" textLength="8" lengthAdjust="spacingAndGlyphs">ROOM</text>
<rect x="464.3" y="255.60000000000002" width="2.4" height="2" fill="#222"/>
<rect x="488.7" y="255.60000000000002" width="2.4" height="2" fill="#222"/>
<path d="M501.3 269 V245.7 Q501.3 244.2 503.3 244.2 H523.4 Q525.4 244.2 525.4 246.2 V269" fill="none" stroke="#222" stroke-width="1"/>
<line x1="501.3" y1="256.9" x2="525.4" y2="256.9" stroke="#222" stroke-width="1"/>
<line x1="513.7" y1="244.2" x2="513.7" y2="269" stroke="#222" stroke-width="0.9"/>
<text x="503.5" y="251.6" font-family="Liberation Sans" font-weight="bold" font-size="3.3" fill="#333" stroke="#333" stroke-width="0.2" textLength="8" lengthAdjust="spacingAndGlyphs">ROOM</text>
<text x="503.5" y="264.1" font-family="Liberation Sans" font-weight="bold" font-size="3.3" fill="#333" stroke="#333" stroke-width="0.2" textLength="8" lengthAdjust="spacingAndGlyphs">ROOM</text>
<text x="515.5" y="251.6" font-family="Liberation Sans" font-weight="bold" font-size="3.3" fill="#333" stroke="#333" stroke-width="0.2" textLength="8" lengthAdjust="spacingAndGlyphs">ROOM</text>
<text x="515.5" y="264.1" font-family="Liberation Sans" font-weight="bold" font-size="3.3" fill="#333" stroke="#333" stroke-width="0.2" textLength="8" lengthAdjust="spacingAndGlyphs">ROOM</text>
<rect x="500.1" y="255.89999999999998" width="2.4" height="2" fill="#222"/>
<rect x="524.1999999999999" y="255.89999999999998" width="2.4" height="2" fill="#222"/>
<path d="M537.3 269 V241.9 Q537.3 240.4 539.3 240.4 H559 Q561 240.4 561 242.4 V269" fill="none" stroke="#222" stroke-width="1"/>
<line x1="537.3" y1="254.2" x2="561" y2="254.2" stroke="#222" stroke-width="1"/>
<text x="545.1" y="248.4" font-family="Liberation Sans" font-weight="bold" font-size="3.3" fill="#333" stroke="#333" stroke-width="0.2" textLength="8" lengthAdjust="spacingAndGlyphs">ROOM</text>
<text x="545.1" y="262.7" font-family="Liberation Sans" font-weight="bold" font-size="3.3" fill="#333" stroke="#333" stroke-width="0.2" textLength="8" lengthAdjust="spacingAndGlyphs">ROOM</text>
<rect x="536.0999999999999" y="253.2" width="2.4" height="2" fill="#222"/>
<rect x="559.8" y="253.2" width="2.4" height="2" fill="#222"/>
<text x="579.6" y="253.5" font-family="Liberation Sans" font-weight="bold" font-size="3.3" fill="#333" stroke="#333" stroke-width="0.2" textLength="10.0" lengthAdjust="spacingAndGlyphs">ROOM</text>
<path d="M423.7 249 Q441.6 245.5 459.6 249" fill="none" stroke="#333" stroke-width="0.8"/>
<rect x="423.7" y="250.9" width="35.9" height="2.2" fill="#444"/>
<rect x="426" y="251.3" width="5" height="1.4" fill="#fff"/><rect x="452" y="251.3" width="5" height="1.4" fill="#fff"/>
<rect x="430.4" y="255.4" width="21.6" height="6.6" fill="#f0f0f0" stroke="#666" stroke-width="0.6"/>
<text x="436.2" y="259.8" font-family="Liberation Sans" font-weight="bold" font-size="3.3" fill="#333" stroke="#333" stroke-width="0.2" textLength="10.0" lengthAdjust="spacingAndGlyphs">ROOM</text>
<rect x="423.7" y="264.6" width="35.9" height="3.4" fill="#ddd" stroke="#444" stroke-width="0.6"/>
<rect x="423" y="264" width="3.5" height="4" fill="#333"/><rect x="457" y="264" width="3.5" height="4" fill="#333"/>
<circle cx="469" cy="276" r="2" fill="none" stroke="#777" stroke-width="0.5"/>
<rect x="277.7" y="156" width="327.8" height="113" fill="none" stroke="#1a1a1a" stroke-width="1.3"/>
<line x1="258.5" y1="329.6" x2="631.7" y2="329.6" stroke="#8a8a8a" stroke-width="0.9"/>
<line x1="354.6" y1="329.6" x2="354.6" y2="355" stroke="#8a8a8a" stroke-width="0.8"/>
<line x1="385.6" y1="329.6" x2="385.6" y2="355" stroke="#8a8a8a" stroke-width="0.8"/>
<line x1="416.6" y1="329.6" x2="416.6" y2="355" stroke="#8a8a8a" stroke-width="0.8"/>
<line x1="446.8" y1="329.6" x2="446.8" y2="355" stroke="#8a8a8a" stroke-width="0.8"/>
<line x1="477.6" y1="329.6" x2="477.6" y2="355" stroke="#8a8a8a" stroke-width="0.8"/>
<line x1="508.5" y1="329.6" x2="508.5" y2="355" stroke="#8a8a8a" stroke-width="0.8"/>
<line x1="539.5" y1="329.6" x2="539.5" y2="355" stroke="#8a8a8a" stroke-width="0.8"/>
<line x1="570.6" y1="329.6" x2="570.6" y2="355" stroke="#8a8a8a" stroke-width="0.8"/>
<line x1="600.7" y1="329.6" x2="600.7" y2="355" stroke="#8a8a8a" stroke-width="0.8"/>
<rect x="260.6" y="332.8" width="40" height="20.6" fill="#f5f7f7" stroke="#c8cccc" stroke-width="0.8"/>
<text x="280.8" y="340.3" font-family="Liberation Sans" font-weight="bold" font-size="4.6" fill="#3f6068" text-anchor="middle" letter-spacing="1.6">BRIGHTER</text>
<text x="280.8" y="345.2" font-family="Liberation Sans" font-weight="bold" font-size="4.6" fill="#3f6068" text-anchor="middle" letter-spacing="1.45">GRAPHICS</text>
<rect x="270" y="347.3" width="21" height="0.6" fill="#aab"/>
<rect x="303.4" y="336.3" width="9.3" height="9.9" fill="#1f8ad0"/>
<rect x="305.4" y="338.3" width="5.3" height="5.9" fill="#fff"/><rect x="306.7" y="339.6" width="2.7" height="3.3" fill="#1f8ad0"/>
<text x="314.8" y="346" font-family="Liberation Sans" font-weight="bold" font-size="10.2" fill="#1f86c8" textLength="37" lengthAdjust="spacingAndGlyphs">BLUEBEAM</text>
<rect x="316" y="347.2" width="16" height="0.8" fill="#8890a0"/>
<rect x="356.5" y="332.0" width="20" height="1" fill="#555"/>
<rect x="356.5" y="334.6" width="10" height="0.75" fill="#b0b0b0"/>
<rect x="356.5" y="337.1" width="11" height="0.75" fill="#b0b0b0"/>
<rect x="356.5" y="340.1" width="9" height="0.75" fill="#b0b0b0"/>
<rect x="356.5" y="345.1" width="12" height="0.75" fill="#b0b0b0"/>
<rect x="356.5" y="348.1" width="20" height="0.75" fill="#b0b0b0"/>
<rect x="387.5" y="332.0" width="22" height="1" fill="#555"/>
<rect x="387.5" y="337.1" width="17" height="0.75" fill="#b0b0b0"/>
<rect x="387.5" y="340.1" width="20" height="0.75" fill="#b0b0b0"/>
<rect x="418.5" y="332.0" width="19" height="1" fill="#555"/>
<rect x="418.5" y="337.1" width="15" height="0.75" fill="#b0b0b0"/>
<rect x="418.5" y="342.6" width="14" height="0.75" fill="#b0b0b0"/>
<rect x="418.5" y="345.1" width="17" height="0.75" fill="#b0b0b0"/>
<rect x="418.5" y="348.1" width="14" height="0.75" fill="#b0b0b0"/>
<rect x="449" y="332.0" width="10" height="0.8" fill="#555"/>
<rect x="449" y="334.5" width="26" height="0.7" fill="#aaa"/>
<rect x="449" y="336.2" width="26" height="0.7" fill="#aaa"/>
<rect x="449" y="338.0" width="20" height="0.7" fill="#aaa"/>
<rect x="449" y="339.8" width="26" height="0.7" fill="#aaa"/>
<rect x="449" y="341.5" width="26" height="0.7" fill="#aaa"/>
<rect x="449" y="343.2" width="20" height="0.7" fill="#aaa"/>
<rect x="449" y="345.0" width="26" height="0.7" fill="#aaa"/>
<rect x="449" y="346.8" width="26" height="0.7" fill="#aaa"/>
<rect x="449" y="348.5" width="20" height="0.7" fill="#aaa"/>
<rect x="480" y="331.6" width="25" height="0.8" fill="#555"/>
<rect x="480.9" y="334.9" width="24" height="9" fill="#c8c8c8" stroke="#777" stroke-width="0.5"/>
<rect x="482" y="336.0" width="22" height="0.6" fill="#888"/>
<rect x="482" y="338.0" width="22" height="0.6" fill="#888"/>
<rect x="482" y="340.0" width="22" height="0.6" fill="#888"/>
<rect x="482" y="342.0" width="22" height="0.6" fill="#888"/>
<text x="524" y="340.8" font-family="Liberation Sans" font-weight="bold" font-size="3.5" fill="#111" stroke="#111" stroke-width="0.2" text-anchor="middle">NOT FOR</text>
<text x="524" y="344.9" font-family="Liberation Sans" font-weight="bold" font-size="3.5" fill="#111" stroke="#111" stroke-width="0.2" text-anchor="middle" textLength="25.5" lengthAdjust="spacingAndGlyphs">CONSTRUCTION</text>
<rect x="541.5" y="331.6" width="6" height="0.8" fill="#666"/>
<rect x="572.5" y="331.6" width="6" height="0.8" fill="#666"/>
<rect x="605" y="331.1" width="22" height="0.7" fill="#888"/>
<rect x="607" y="334.6" width="18" height="0.8" fill="#777"/>
<rect x="612" y="337.8" width="8" height="0.8" fill="#777"/>
<text x="606" y="350.3" font-family="Liberation Sans" font-weight="bold" font-size="9" fill="#1a1a1a" textLength="20.2" lengthAdjust="spacingAndGlyphs">A2.2.1</text>
<line x1="600.7" y1="351.5" x2="631.7" y2="351.5" stroke="#999" stroke-width="0.5"/>
<rect x="606" y="352.9" width="20" height="0.6" fill="#999"/></g></g></svg>
<!-- left sidebar icons -->
<svg style="left:0;top:0" width="20" height="240">
 <g stroke="#cdcdcd" fill="none" stroke-width="1">
  <circle cx="6.8" cy="32.6" r="2.6"/><path d="M8.7 34.6 L11.4 37.6" stroke-width="1.2"/>
  <rect x="3" y="48.3" width="9.8" height="3.6"/><path d="M5.5 49.6v1.2M7.9 49.6v1.2M10.3 49.6v1.2" stroke-width="0.8"/>
  <path d="M12.4 64 H6 L3 67 L6 70 H12.4 Z"/>
  <path d="M4.3 84.8 H12 M5 83 L10.8 78 L12 79.2 L6.8 84" /><path d="M9.5 77.5 L12.5 80"/>
  <rect x="4.2" y="111.8" width="7.6" height="7.6" rx="1"/><path d="M4.5 114 H11.5 M6 116.5 H10"/>
  <path d="M4.3 126.6 H11.7 V134.2 H4.3 Z M9.2 127 V131 H6.5 V134" />
  <path d="M4.3 141.5 H11.5 V150 H4.3 Z" fill="#6a6a6a"/><path d="M5.5 143.5 H8.5 M5.5 145.5 H10 M5.5 147.5 H10" stroke="#ddd"/>
  <path d="M3.6 162.8 L7.8 160.3 L12 162.8 L7.8 165.3 Z M3.6 165.5 L7.8 168 L12 165.5" stroke-width="1.1"/>
  <circle cx="7.8" cy="179" r="3.4" fill="#9a9a9a" stroke="#c8c8c8" stroke-dasharray="1.3 0.8"/><circle cx="7.8" cy="179" r="1.3" fill="#2c2c2c" stroke="none"/>
  <path d="M4.3 191.5 H11.5 V199.5 H4.3 Z" fill="#a8a8a8"/>
  <path d="M4 207.8 H11.8 V214 H4 Z M6 207.8 V206 H9.8 V207.8 M4 210.8 H11.8"/>
  <path d="M5.5 223.5 L11 222.5 V229.5 L6.5 231 L4.2 227.5 Z M6.5 231 V227"/>
 </g>
 <circle cx="6.5" cy="194" r="1" fill="#2c2c2c"/>
</svg>
<!-- yellow focus outline around active tab -->
<div class="a" style="left:0;top:90px;width:17px;height:2px;background:#ebca6a"></div>
<div class="a" style="left:0;top:90px;width:2px;height:18px;background:#ebca6a"></div>
<div class="a" style="left:0;top:106px;width:17px;height:2px;background:#ebca6a"></div>
<div class="a" style="left:2px;top:92px;width:15px;height:14px;background:#1e5f8c"></div>
<svg style="left:0;top:0" width="20" height="110">
 <g stroke="#8fc6ee" fill="none" stroke-width="0.9">
  <rect x="5" y="95" width="3.2" height="3.2" rx="0.5"/><rect x="10" y="95" width="3.2" height="3.2" rx="0.5"/>
  <rect x="5" y="100" width="3.2" height="3.2" rx="0.5"/><rect x="10" y="100" width="3.2" height="3.2" rx="0.5"/>
 </g>
</svg>

<div id="rside" class="a"></div>
<div id="btb" class="a"></div>
<div id="status" class="a"></div>

<!-- panel header -->
<span class="t" style="left:22px;top:31px;font-size:6.3px;font-weight:bold;color:#f0f0f0">Thumbnails</span>
<svg style="left:0;top:0" width="240" height="130">
 <g stroke="#d0d0d0" fill="none" stroke-width="0.9">
  <path d="M61 33.6 L62.5 35 L64 33.6" stroke-width="1.1"/>
  <path d="M69.8 30.3 V34 H77.8 V30.3"/><path d="M69.8 36.8 H77.8"/>
  <path d="M80.6 33.6 L82.1 35 L83.6 33.6" stroke-width="1.1"/>
  <path d="M88.3 30.3 V34 H97 V30.3"/>
 </g>
 <circle cx="92.6" cy="36.8" r="1.6" fill="#8a8a48"/>
 <!-- thumb 1 -->
 <rect x="22.2" y="59.2" width="64" height="46.3" fill="#2774b4"/>
 <rect x="24.5" y="61.5" width="59.5" height="41.7" fill="#fff"/>
 <rect x="91.5" y="61.6" width="59.8" height="42.7" fill="#d8d8d8"/>
 <rect x="92.5" y="62.6" width="57.8" height="40.7" fill="#fff"/>
</svg>
<svg style="left:0;top:0;filter:saturate(0.55)" width="240" height="130">
<g transform="translate(24.5 61.5) scale(0.1482 0.1457) translate(-240 -73)"><use href="#plan"/>
 <rect x="321" y="156" width="240" height="28" fill="#6a4a40" opacity="0.45"/>
 <rect x="310" y="196" width="76" height="32" fill="#8090a0" opacity="0.3"/>
 <rect x="386" y="189" width="49" height="45" fill="#2a1818" opacity="0.7"/>
 <rect x="448" y="189" width="49" height="45" fill="#2a1818" opacity="0.7"/>
 <rect x="322" y="241" width="240" height="28" fill="#444" opacity="0.45"/>
 <rect x="278" y="156" width="328" height="113" fill="none" stroke="#333" stroke-width="2.5"/>
 <rect x="477" y="332" width="60" height="12" fill="#222" opacity="0.5"/>
 <rect x="258" y="329" width="374" height="26" fill="#999" opacity="0.25"/>
</g>
</svg>
<svg style="left:0;top:0;filter:grayscale(0.85)" width="240" height="130">
<g transform="translate(92.5 62.6) scale(0.144 0.1422) translate(-240 -73)"><use href="#plan"/>
 <rect x="310" y="196" width="76" height="32" fill="#fff"/>
 <rect x="321" y="156" width="240" height="28" fill="#5a4a40" opacity="0.45"/>
 <rect x="386" y="189" width="49" height="45" fill="#141010" opacity="0.75"/>
 <rect x="448" y="189" width="49" height="45" fill="#141010" opacity="0.75"/>
 <rect x="322" y="241" width="240" height="28" fill="#444" opacity="0.45"/>
 <rect x="278" y="156" width="328" height="113" fill="none" stroke="#333" stroke-width="2.5"/>
 <rect x="477" y="332" width="60" height="12" fill="#222" opacity="0.5"/>
 <rect x="258" y="329" width="374" height="26" fill="#999" opacity="0.25"/>
</g>
</svg>
<svg style="left:0;top:0" width="240" height="130">
 <rect x="94.3" y="99.2" width="5" height="4.2" fill="#e0c040"/><rect x="99.3" y="99.2" width="7" height="4.2" fill="#9cc8e8"/>
 <rect x="131" y="79" width="9" height="9" fill="none" stroke="#b03a30" stroke-width="0.8" opacity="0.6"/>
</svg>
<span class="t" style="left:42.8px;top:107.6px;font-size:5.2px;color:#e8e8e8">Floor Plan</span>
<span class="t" style="left:35.3px;top:115.4px;font-size:4.95px;color:#e0e0e0">9.525 cm = 30'-0"</span>
<span class="t" style="left:109.8px;top:107.6px;font-size:5.2px;color:#e8e8e8">Floor Plan</span>
<span class="t" style="left:93.5px;top:115.4px;font-size:4.85px;color:#e0e0e0">X: 9.525 cm = 30'-0", Y: ...</span>

<!-- right toolbar -->
<div class="a" style="left:651px;top:28px;width:18px;height:1px;background:#4a4a4a"></div>
<svg style="left:0;top:0" width="670" height="423">
 <g fill="#3a3a46">
  <rect x="654" y="309" width="13" height="13"/><rect x="654" y="325.5" width="13" height="13"/>
  <rect x="654" y="341.5" width="13" height="13"/><rect x="654" y="357" width="13" height="13"/>
 </g>
 <g stroke="#cfcfcf" fill="none" stroke-width="0.95">
  <rect x="656" y="34.2" width="8.6" height="8" stroke-width="1.2"/>
  <path d="M658.3 40.8 L660.3 35.8 L662.3 40.8 M659 39.2 H661.6" stroke-width="1.2" stroke="#eee"/>
  <path d="M656.5 90 H665" />
  <path d="M656.3 82 H663.3 V86.5 H656.3 Z M663.3 86.5 L664.5 89"/>
  <path d="M657.5 99.5 a1.6 1.6 0 0 1 3 -0.8 a1.6 1.6 0 0 1 3 1 a1.6 1.6 0 0 1 0.5 3 a1.6 1.6 0 0 1 -2 2.4 a1.6 1.6 0 0 1 -3 0.3 a1.6 1.6 0 0 1 -2.3 -2.3 a1.6 1.6 0 0 1 0.8 -3.6 Z"/>
  <path d="M656.3 115 H663.3 V119 H656.3 Z M663.3 119 V121.5"/>
  <circle cx="659.8" cy="131.8" r="1.6"/><path d="M659.8 133.4 V135 M655.8 135 H663.8 V137.6 H655.8 Z"/>
  <path d="M665.2 134.2 L666.5 135.5 L667.8 134.2" stroke-width="0.8"/>
  <rect x="656" y="146.6" width="9" height="8"/><path d="M656.5 153.5 L659.5 150.5 L662 152.5 L664.5 150.5" stroke-width="0.8"/>
  <path d="M657.5 162.5 V171.5 H665 M656 164 H664 V172.5" stroke-width="0.85"/>
  <path d="M656 190.5 L665.5 181.5"/>
  <path d="M656 206.5 L663.5 199"/><path d="M661.5 198.3 L665.2 197.3 L664.2 201 Z" fill="#e0e0e0"/>
  <path d="M656 221 C657 215.5,660.5 212.8,665.5 212.5"/>
  <path d="M656.5 237.5 L659.5 235.5 L659.5 233.5 L663 232 L663 230.5 L665.5 229.5" stroke-width="0.85"/>
  <path d="M656 251 H665.5 M656.3 249 V253 M665.2 249 V253" stroke-width="0.9"/>
  <rect x="656.3" y="263.3" width="9" height="7"/>
  <ellipse cx="660.8" cy="282.3" rx="4.5" ry="3.2"/>
  <path d="M656.5 295 H661.5 L665 303 H656.5 Z"/>
  <path d="M656.5 319.5 L664.5 311.5" stroke-dasharray="1.2 1"/><path d="M656.5 311.5 V319.5 H664.5" stroke-dasharray="1.2 1"/>
  <path d="M656.5 336 L664.5 328 V336 Z"/>
  <path d="M656 348 H665.5 M656.3 345.5 V350.5 M665.2 345.5 V350.5"/>
  <path d="M656.5 366.5 L664.5 361 M656.5 364 L663 360.5" stroke-width="0.8"/>
 </g>
 <path d="M656.5 57 L661 50.5 L665 54.5 L660.5 59 Z" fill="#a99a45"/><path d="M658 54.5 L662.5 52 M659 56.5 L663.8 54" stroke="#5a5020" stroke-width="0.6"/><path d="M655.8 58.8 L657.5 56 L660.5 59 Z" fill="#f0f0e0"/>
 <path d="M657.5 71.5 L663 65.3 L665.2 67.5 L659.5 73.5 Z" fill="#2f86c8"/><path d="M656 74.8 L657.5 71.5 L659.5 73.5 Z" fill="#d8e8f0"/>
 <line x1="651" y1="177" x2="670" y2="177" stroke="#3e3e3e" stroke-width="0.8"/>
</svg>

<!-- scrollbar -->
<div class="a" style="left:643px;top:42px;width:8px;height:348px;background:#f1f1f1"></div>
<div class="a" style="left:645px;top:50px;width:4px;height:199px;background:#8c8c8c"></div>
<svg style="left:0;top:0" width="670" height="60"><rect x="644.6" y="43.5" width="5" height="6" fill="#d4d4d4"/><rect x="645.3" y="44.2" width="3.6" height="2" fill="#f4f4f4"/></svg>

<!-- bottom toolbar -->
<div class="a" style="left:0;top:390.5px;width:16.5px;height:16px;background:#1e5f8c"></div>
<svg style="left:0;top:0" width="670" height="423">
 <g stroke="#b9ddf5" stroke-width="1.1">
  <path d="M5 395.8 H6 M7.3 395.8 H12 M5 398.6 H6 M7.3 398.6 H12 M5 401.4 H6 M7.3 401.4 H12"/>
 </g>
 <path d="M21 402 L24.2 396.2 L27.4 402 Z" stroke="#f0f0f0" stroke-width="1.1" fill="none"/>
 <line x1="34" y1="399" x2="219" y2="399" stroke="#4a4a4a" stroke-width="1"/>
 <circle cx="81.5" cy="398.8" r="2.4" fill="#9a9a9a"/>
 <path d="M225 404 L229.9 395 L234.8 404 Z" stroke="#f2f2f2" stroke-width="1.1" fill="none"/>
 <line x1="238.5" y1="390" x2="238.5" y2="407" stroke="#262626" stroke-width="1"/>
 <rect x="288.3" y="391" width="15.8" height="16" fill="#1e5f8c"/>
 <rect x="321" y="391" width="15.8" height="16" fill="#1e5f8c"/>
 <g stroke="#c8c8c8" fill="none" stroke-width="0.9">
  <rect x="242.5" y="395.5" width="7" height="7" stroke="#484848"/>
  <rect x="258.3" y="395.3" width="8" height="7.6"/><path d="M262.3 395.3 V402.9"/>
  <rect x="274" y="395.3" width="8.2" height="7.6"/><path d="M274 399.1 H282.2"/>
  <path d="M308.5 395 V401.5 H316.5 M310.5 402.5 V396.5 H314.5 M314.5 394.5 V396.5 M316.5 396.5 H314.5" />
  <path d="M343.3 395 V402.5 L345.3 400.8 L347 403.5 L348.3 402.8 L346.8 400.2 H349 Z"/>
  <path d="M358.3 395 H361.3 M359.8 395 V403 M358.3 403 H361.3"/><path d="M361.5 402 L363 398.5 L364.5 402 M362 401 H364"/>
  <circle cx="376" cy="398" r="3"/><path d="M378.2 400.3 L381.3 403.4" stroke-width="1.2"/>
  <path d="M375 398 H377 M376 397 V399" stroke-width="0.7"/>
  <path d="M395 396 L392.5 398.8 L395 401.5 M391.5 396 V401.5" stroke="#4a4a4a"/>
  <path d="M411 396 L408.5 398.8 L411 401.5" stroke="#4a4a4a"/>
 </g>
 <g stroke="#bfe0f5" fill="none" stroke-width="0.9">
  <path d="M292.5 394.8 H297.8 L300 397 V404 H292.5 Z"/><path d="M294.5 399.5 H298.5 M296.5 397.5 V401.5"/>
  <path d="M325.3 403.5 C324 401,324.2 398.5,325.5 397.5 V395.5 C326.5 395,327.5 395.4,327.5 396.5 V395 C328.5 394.5,329.5 394.8,329.5 396 C330.5 395.5,331.5 396,331.5 397 V400.5 C331.5 402,330.5 403.5,329.5 404 Z"/>
 </g>
 <path d="M521.3 398.3 L523 400 L524.7 398.3" stroke="#bbb" stroke-width="0.9" fill="none"/>
 <rect x="521.5" y="391.5" width="3" height="4" fill="#444"/>
</svg>
<span class="t" style="left:539.5px;top:395.5px;font-size:6.1px;color:#e4e4e4">106.68 x 76.20 cm</span>
<span class="t" style="left:598.5px;top:395.5px;font-size:6.05px;color:#e4e4e4">9.525 cm = 30'-0"</span>

<!-- status bar -->
<span class="t" style="left:-0.5px;top:412.5px;font-size:5.6px;color:#7a7a7a">Ready</span>
<div class="a" style="left:418.8px;top:408px;width:48px;height:15px;background:#1e5f8c"></div>
<div class="a" style="left:482.8px;top:408px;width:16.7px;height:15px;background:#1e5f8c"></div>
<svg style="left:0;top:0" width="670" height="423">
 <g fill="#e0e0e0">
  <rect x="407.5" y="411.5" width="1.4" height="1.4"/><rect x="410" y="411.5" width="1.4" height="1.4"/><rect x="412.5" y="411.5" width="1.4" height="1.4"/>
  <rect x="407.5" y="414" width="1.4" height="1.4"/><rect x="410" y="414" width="1.4" height="1.4"/><rect x="412.5" y="414" width="1.4" height="1.4"/>
  <rect x="407.5" y="416.5" width="1.4" height="1.4"/><rect x="410" y="416.5" width="1.4" height="1.4"/><rect x="412.5" y="416.5" width="1.4" height="1.4"/>
 </g>
 <g stroke="#c5e2f5" fill="none" stroke-width="0.9">
  <path d="M423.5 411.5 H424.5 M423.5 414 H424.5 M423.5 416.5 H424.5 M426 411.5 H430 L426 414 H429 C430.5 414,430.5 418,428.5 418 H426"/>
  <path d="M439.5 411 H443.5 L445.5 413 V419 H439.5 Z M442 414 H444 M442 416.5 H444"/>
  <path d="M455 418.5 L458 412 L461 418.5 Z M458.5 415 a2 2 0 1 1 2 2"/>
  <rect x="487.3" y="411.3" width="8" height="7.4"/><path d="M489 416.5 L493.5 413 M491.5 413 H493.5 V415"/>
 </g>
 <path d="M472.5 419 L476 413 L478.5 414.5 L475.5 419.5 Z M476 413 L477.5 411.5 L479.5 413" stroke="#d8d8d8" stroke-width="0.9" fill="none"/>
 <path d="M501 414 L502.5 415.5 L504 414" stroke="#ccc" stroke-width="0.9" fill="none"/>
</svg>
<span class="t" style="left:515.5px;top:412.8px;font-size:5.35px;color:#d8d8d8">9.525 cm = 30'-0"</span>
<span class="t" style="left:568px;top:412.8px;font-size:5.5px;color:#d8d8d8">106.68 x 76.20 cm</span>
<span class="t" style="left:628px;top:412.8px;font-size:5.5px;color:#d8d8d8">(40.36, -7.51)</span>

</div></body></html>
